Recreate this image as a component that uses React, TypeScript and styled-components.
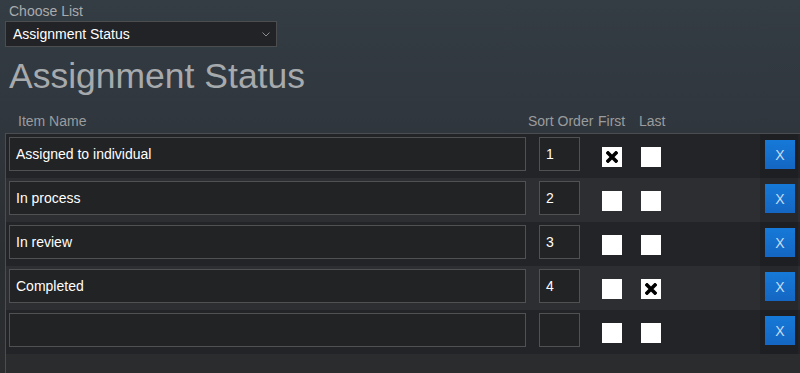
import React from "react";
import styled, { createGlobalStyle } from "styled-components";

const Global = createGlobalStyle`
  html, body { margin: 0; padding: 0; }
  body {
    width: 800px;
    height: 373px;
    overflow: hidden;
    font-family: "Liberation Sans", Arial, sans-serif;
    background: linear-gradient(180deg, #343c44 0%, #30373e 30%, #2b2e31 70%, #2a2c2e 100%);
  }
`;

const Page = styled.div`
  position: relative;
  width: 800px;
  height: 373px;
  overflow: hidden;
  display: flex;
  flex-direction: column;
`;

const Label = styled.div`
  font-size: 14px;
  color: #a9abad;
  margin: 3px 0 0 9px;
  line-height: 16px;
`;

const SelectBox = styled.div`
  margin: 2px 0 0 5px;
  width: 272px;
  height: 26px;
  box-sizing: border-box;
  border: 1px solid #4c4d4f;
  background: #222326;
  display: flex;
  align-items: center;
  justify-content: space-between;
  padding: 0 6px 0 7px;
  color: #ffffff;
  font-size: 14px;
`;

const Heading = styled.h1`
  margin: 9px 0 0 9px;
  font-size: 35.5px;
  font-weight: normal;
  color: #a7aaad;
  line-height: 40px;
`;

const HeaderRow = styled.div`
  display: flex;
  margin-top: 17px;
  height: 20px;
  font-size: 14px;
  color: #9a9c9e;
  line-height: 16px;
`;

const HeadCell = styled.div<{ $w: number }>`
  width: ${(p) => p.$w}px;
  flex: none;
`;

const Table = styled.div`
  margin-left: 5px;
  flex: 1;
  border-left: 1px solid #4b4e51;
  border-top: 1px solid #4b4e51;
  display: flex;
  flex-direction: column;
`;

const Row = styled.div<{ $alt: boolean }>`
  display: grid;
  grid-template-columns: 526px 64px 40px 40px 1fr 38px 2px;
  height: 44px;
  background: ${(p) => (p.$alt ? "#2c2e31" : "#232427")};
`;

const Cell = styled.div<{ $pl: number; $pt?: number }>`
  padding-left: ${(p) => p.$pl}px;
  padding-top: ${(p) => p.$pt ?? 3}px;
  box-sizing: border-box;
`;

const XCell = styled.div`
  background: rgba(0, 0, 0, 0.12);
  padding: 6px 0 0 5px;
  box-sizing: border-box;
`;

const TextInput = styled.div<{ $w: number }>`
  width: ${(p) => p.$w}px;
  height: 34px;
  box-sizing: border-box;
  border: 1px solid #4f5153;
  background: #222325;
  color: #ffffff;
  font-size: 14px;
  display: flex;
  align-items: center;
  padding-left: 6px;
`;

const Check = styled.div`
  width: 20px;
  height: 20px;
  background: #ffffff;
  display: flex;
  align-items: center;
  justify-content: center;
`;

const XButton = styled.div`
  width: 30px;
  height: 29px;
  background: linear-gradient(180deg, #1679d8 0%, #1466c2 100%);
  color: #c8dcf2;
  font-size: 14px;
  display: flex;
  align-items: center;
  justify-content: center;
`;

const Cross = () => (
  <svg width="12" height="12" viewBox="0 0 12 12">
    <path d="M2 2 L10 10 M10 2 L2 10" stroke="#000" strokeWidth="3.6" strokeLinecap="square" />
  </svg>
);

const Chevron = () => (
  <svg width="8" height="5" viewBox="0 0 8 5">
    <path d="M0.5 0.5 L4 4 L7.5 0.5" stroke="#8a8c8e" strokeWidth="1" fill="none" />
  </svg>
);

const items = [
  { name: "Assigned to individual", order: "1", first: true, last: false },
  { name: "In process", order: "2", first: false, last: false },
  { name: "In review", order: "3", first: false, last: false },
  { name: "Completed", order: "4", first: false, last: true },
  { name: "", order: "", first: false, last: false },
];

export default function App() {
  return (
    <>
      <Global />
      <Page>
        <Label>Choose List</Label>
        <SelectBox>
          <span>Assignment Status</span>
          <Chevron />
        </SelectBox>
        <Heading>Assignment Status</Heading>
        <HeaderRow>
          <HeadCell $w={18} />
          <HeadCell $w={510}>Item Name</HeadCell>
          <HeadCell $w={70}>Sort Order</HeadCell>
          <HeadCell $w={41}>First</HeadCell>
          <HeadCell $w={40}>Last</HeadCell>
        </HeaderRow>
        <Table>
          {items.map((it, i) => (
            <Row key={i} $alt={i % 2 === 1}>
              <Cell $pl={3}>
                <TextInput $w={517}>{it.name}</TextInput>
              </Cell>
              <Cell $pl={7}>
                <TextInput $w={41}>{it.order}</TextInput>
              </Cell>
              <Cell $pl={6} $pt={13}>
                <Check>{it.first && <Cross />}</Check>
              </Cell>
              <Cell $pl={5} $pt={13}>
                <Check>{it.last && <Cross />}</Check>
              </Cell>
              <div />
              <XCell>
                <XButton>X</XButton>
              </XCell>
              <div />
            </Row>
          ))}
        </Table>
      </Page>
    </>
  );
}
